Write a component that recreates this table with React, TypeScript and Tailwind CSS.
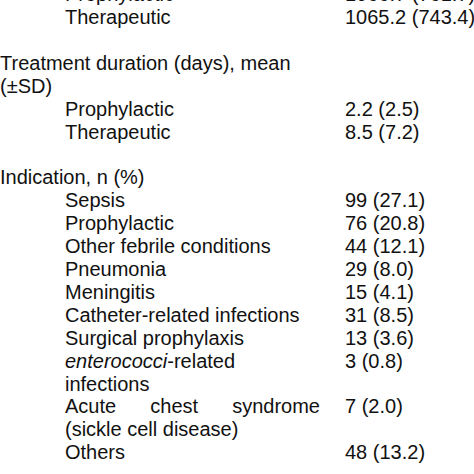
import React from "react";

type Row =
  | { kind: "blank" }
  | { kind: "header"; text: React.ReactNode }
  | { kind: "item"; label: React.ReactNode; value: string };

const rows: Row[] = [
  { kind: "item", label: "Prophylactic", value: "1066.7 (761.7)" },
  { kind: "item", label: "Therapeutic", value: "1065.2 (743.4)" },
  { kind: "blank" },
  { kind: "header", text: "Treatment duration (days), mean (±SD)" },
  { kind: "item", label: "Prophylactic", value: "2.2 (2.5)" },
  { kind: "item", label: "Therapeutic", value: "8.5 (7.2)" },
  { kind: "blank" },
  { kind: "header", text: "Indication, n (%)" },
  { kind: "item", label: "Sepsis", value: "99 (27.1)" },
  { kind: "item", label: "Prophylactic", value: "76 (20.8)" },
  { kind: "item", label: "Other febrile conditions", value: "44 (12.1)" },
  { kind: "item", label: "Pneumonia", value: "29 (8.0)" },
  { kind: "item", label: "Meningitis", value: "15 (4.1)" },
  { kind: "item", label: "Catheter-related infections", value: "31 (8.5)" },
  { kind: "item", label: "Surgical prophylaxis", value: "13 (3.6)" },
  {
    kind: "item",
    label: (
      <>
        <i>enterococci</i>-related infections
      </>
    ),
    value: "3 (0.8)",
  },
  { kind: "item", label: "Acute chest syndrome (sickle cell disease)", value: "7 (2.0)" },
  { kind: "item", label: "Others", value: "48 (13.2)" },
];

export default function App() {
  return (
    <div className="w-[474px] h-[474px] overflow-hidden bg-white">
      <div
        className="mt-[-16.8px] text-[20px] leading-[22.9px] text-[#111111]"
        style={{ fontFamily: '"Liberation Sans", Arial, Helvetica, sans-serif' }}
      >
        {rows.map((r, i) => {
          if (r.kind === "blank") return <div key={i} className="h-[22.9px]" />;
          if (r.kind === "header")
            return (
              <div key={i} className="w-[320px]">
                {r.text}
              </div>
            );
          return (
            <div key={i} className="flex">
              <div className="w-[320px] shrink-0 pl-[65px] text-justify">{r.label}</div>
              <div className="pl-[25px] whitespace-nowrap">{r.value}</div>
            </div>
          );
        })}
      </div>
    </div>
  );
}
